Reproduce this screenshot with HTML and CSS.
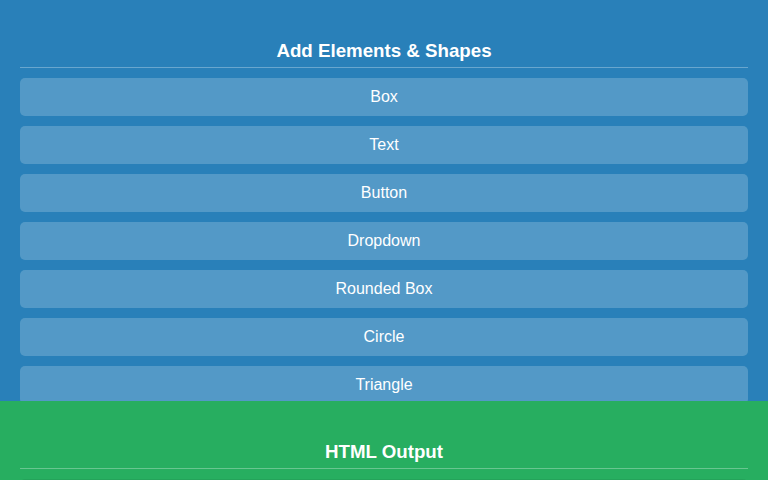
FILE: index.html
```html
<!DOCTYPE html>
<html>
<head>
<meta charset="utf-8">
<link rel="stylesheet" href="styles.css">
</head>
<body>
<section class="panel panel-tools">
  <h3 class="panel-title">Add Elements &amp; Shapes</h3>
  <button class="tool">Box</button>
  <button class="tool">Text</button>
  <button class="tool">Button</button>
  <button class="tool">Dropdown</button>
  <button class="tool">Rounded Box</button>
  <button class="tool">Circle</button>
  <button class="tool">Triangle</button>
</section>
<section class="panel panel-output">
  <h3 class="panel-title">HTML Output</h3>
  <div class="output"></div>
</section>
</body>
</html>
```
FILE: styles.css
```css
html, body {
  margin: 0;
  padding: 0;
  height: 100%;
  overflow: hidden;
  font-family: "Liberation Sans", Arial, sans-serif;
  color: #fff;
}
.panel {
  padding: 0 20px 20px;
  box-sizing: border-box;
  display: flex;
  flex-direction: column;
}
.panel-tools {
  background: #2980b9;
  height: 401px;
  overflow: hidden;
}
.panel-output {
  background: #27ae60;
  height: 79px;
  overflow: hidden;
}
.panel-title {
  font-size: 18.72px;
  font-weight: bold;
  text-align: center;
  margin: 40px 0 10px;
  padding-bottom: 6px;
  line-height: 21px;
  border-bottom: 1px solid rgba(255,255,255,0.3);
}
.tool {
  flex: none;
  display: block;
  width: 100%;
  height: 38px;
  margin: 0 0 10px;
  padding: 0;
  border: none;
  border-radius: 5px;
  background: rgba(255,255,255,0.2);
  color: #fff;
  font-family: "Liberation Sans", Arial, sans-serif;
  font-size: 16px;
  text-align: center;
}
.output {
  flex: none;
  height: 200px;
  background: rgba(0,0,0,0.06);
  border-radius: 5px;
}
```
